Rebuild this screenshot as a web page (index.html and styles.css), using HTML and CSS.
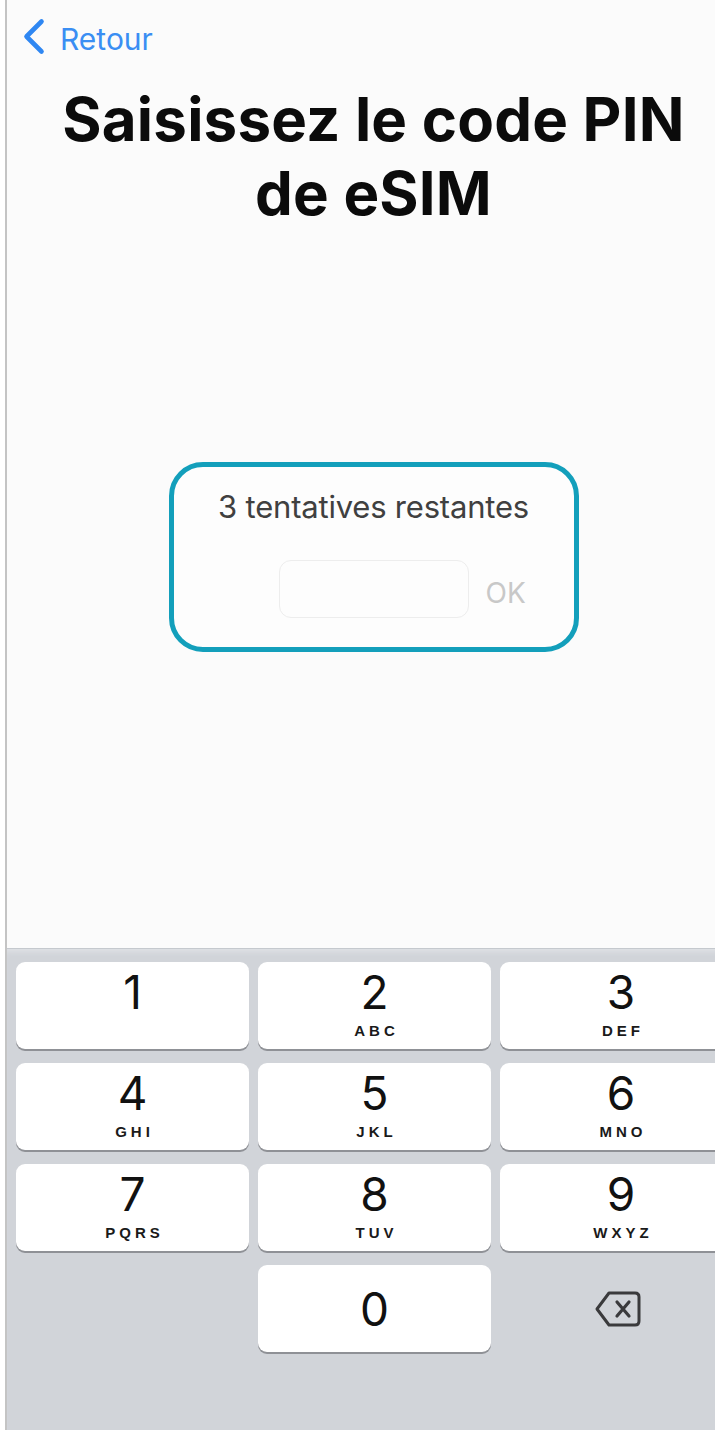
FILE: index.html
```html
<!DOCTYPE html>
<html lang="fr">
<head>
<meta charset="utf-8">
<title>Saisissez le code PIN de eSIM</title>
<link rel="stylesheet" href="styles.css">
</head>
<body>
<div class="screen">
  <div class="content">
    <div class="nav">
      <svg class="chevron" width="24" height="37" viewBox="0 0 24 37" aria-hidden="true">
        <polyline points="19.5,3.5 4.5,18.5 19.5,33.5" fill="none" stroke="#2f87f2" stroke-width="4.6" stroke-linecap="round" stroke-linejoin="round"/>
      </svg>
      <span class="back-label">Retour</span>
    </div>
    <h1 class="title">Saisissez le code PIN<br>de eSIM</h1>
    <div class="pin-box">
      <p class="attempts">3 tentatives restantes</p>
      <div class="pin-row">
        <div class="pin-input"></div>
        <span class="ok">OK</span>
      </div>
    </div>
  </div>
  <div class="keyboard">
    <div class="keys">
      <div class="key"><span class="digit">1</span><span class="letters">&nbsp;</span></div>
      <div class="key"><span class="digit">2</span><span class="letters">ABC</span></div>
      <div class="key"><span class="digit">3</span><span class="letters">DEF</span></div>
      <div class="key"><span class="digit">4</span><span class="letters">GHI</span></div>
      <div class="key"><span class="digit">5</span><span class="letters">JKL</span></div>
      <div class="key"><span class="digit">6</span><span class="letters">MNO</span></div>
      <div class="key"><span class="digit">7</span><span class="letters">PQRS</span></div>
      <div class="key"><span class="digit">8</span><span class="letters">TUV</span></div>
      <div class="key"><span class="digit">9</span><span class="letters">WXYZ</span></div>
      <div class="key-blank"></div>
      <div class="key key-zero"><span class="digit">0</span></div>
      <div class="key-delete">
        <svg width="48" height="40" viewBox="0 0 48 40" aria-hidden="true">
          <path d="M15 4 H41 Q45 4 45 8 V32 Q45 36 41 36 H15 L3 20 Z" fill="none" stroke="#3a3a3c" stroke-width="3" stroke-linejoin="round"/>
          <path d="M23 13 L35 27 M35 13 L23 27" fill="none" stroke="#3a3a3c" stroke-width="3.2" stroke-linecap="round"/>
        </svg>
      </div>
    </div>
  </div>
</div>
</body>
</html>
```
FILE: styles.css
```css
html, body {
  margin: 0;
  padding: 0;
  background: #ffffff;
  overflow: hidden;
}

body {
  width: 715px;
  height: 1439px;
  font-family: Inter, "Liberation Sans", Arial, sans-serif;
}

.screen {
  margin-left: 5px;
  width: 733px;
  height: 1430px;
  border-left: 2px solid #c4c4c4;
  background: #fbfbfb;
  display: flex;
  flex-direction: column;
}

.content {
  height: 948px;
  display: flex;
  flex-direction: column;
  align-items: center;
}

.nav {
  align-self: stretch;
  display: flex;
  align-items: flex-start;
  gap: 14px;
  padding: 18px 0 0 15px;
  height: 37px;
}

.chevron {
  display: block;
  flex: none;
}

.back-label {
  font-size: 30px;
  line-height: 36px;
  padding-top: 3px;
  color: #3a8ef3;
}

.title {
  margin: 27px 0 0;
  font-size: 60px;
  line-height: 74px;
  font-weight: 700;
  color: #0b0b0b;
  text-align: center;
  letter-spacing: 0.2px;
}

.pin-box {
  margin-top: 232px;
  width: 400px;
  height: 180px;
  box-sizing: content-box;
  border: 5px solid #139fbb;
  border-radius: 34px;
  background: #fdfdfd;
  display: flex;
  flex-direction: column;
  align-items: center;
}

.attempts {
  margin: 22px 0 0;
  font-size: 31px;
  line-height: 36px;
  color: #404040;
  letter-spacing: -0.2px;
}

.pin-row {
  margin-top: 35px;
  align-self: stretch;
  display: grid;
  grid-template-columns: 1fr 190px 1fr;
  align-items: center;
}

.pin-input {
  grid-column: 2;
  height: 56px;
  border: 1px solid #ededed;
  border-radius: 12px;
  background: #fdfdfd;
}

.ok {
  grid-column: 3;
  justify-self: start;
  margin-left: 17px;
  padding-top: 8px;
  font-size: 28px;
  color: #c8c8c8;
}

.keyboard {
  flex: 1;
  background: #d1d4d9;
  border-top: 1px solid #c5c9ce;
  box-shadow: inset 0 6px 6px -4px #e2e4e8;
  padding: 13px 0 0 9px;
}

.keys {
  display: grid;
  grid-template-columns: 233px 233px 242px;
  grid-auto-rows: 87px;
  column-gap: 9px;
  row-gap: 14px;
}

.key {
  background: #ffffff;
  border-radius: 9px;
  box-shadow: 0 2px 0 #8f9196;
  display: flex;
  flex-direction: column;
  align-items: center;
  padding-top: 7px;
  box-sizing: border-box;
  color: #111111;
}

.digit {
  font-size: 46px;
  line-height: 46px;
  font-weight: 400;
}

.letters {
  margin-top: 7px;
  font-family: "Liberation Sans", Arial, sans-serif;
  font-size: 15px;
  line-height: 18px;
  font-weight: 700;
  letter-spacing: 4px;
  padding-left: 4px;
  color: #1a1a1a;
}

.key-zero {
  justify-content: center;
  padding-top: 0;
}

.key-delete {
  display: flex;
  align-items: center;
  justify-content: center;
  padding-right: 6px;
}

.key-delete svg {
  display: block;
}
```
